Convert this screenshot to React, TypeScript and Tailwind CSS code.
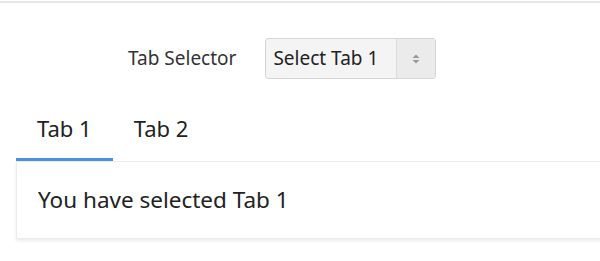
import { useState } from 'react'

const tabs = ['Tab 1', 'Tab 2']

export default function App() {
  const [active, setActive] = useState(0)

  return (
    <div className="w-[600px] h-[261px] overflow-hidden bg-white text-[#222] font-['Noto_Sans',sans-serif]">
      <div className="mt-[1px] h-[2px] bg-[#e6e6e6]" />

      <div className="flex items-center mt-[35px] pl-[128px] gap-[29px]">
        <label className="text-[19px] text-[#333]">Tab Selector</label>
        <div className="flex h-[41px] w-[171px] rounded-[3px] border border-[#d6d6d6] bg-[#f4f4f4] text-[19px]">
          <div className="flex-1 flex items-center pl-[7px]">Select Tab {active + 1}</div>
          <div className="w-[39px] flex items-center justify-center border-l border-[#dcdcdc] bg-[#ebebeb]">
            <svg width="8" height="10" viewBox="0 0 8 10" fill="#999">
              <path d="M4 0.5 L7.5 4 H0.5 Z" />
              <path d="M4 9.5 L7.5 6 H0.5 Z" />
            </svg>
          </div>
        </div>
      </div>

      <div className="ml-4 mt-[33px] flex">
        {tabs.map((t, i) => (
          <button
            key={t}
            onClick={() => setActive(i)}
            className={
              'h-[49px] px-[21px] pb-[14px] text-[22px] leading-none border-b-[3px] ' +
              (i === active ? 'border-[#4a90e2]' : 'border-transparent')
            }
          >
            {t}
          </button>
        ))}
      </div>

      <div className="ml-4 w-[600px] h-[78px] flex items-center pl-[21px] border border-[#ececec] shadow-[0_2px_3px_rgba(0,0,0,0.08)] text-[22.5px]">
        You have selected {tabs[active]}
      </div>
    </div>
  )
}
